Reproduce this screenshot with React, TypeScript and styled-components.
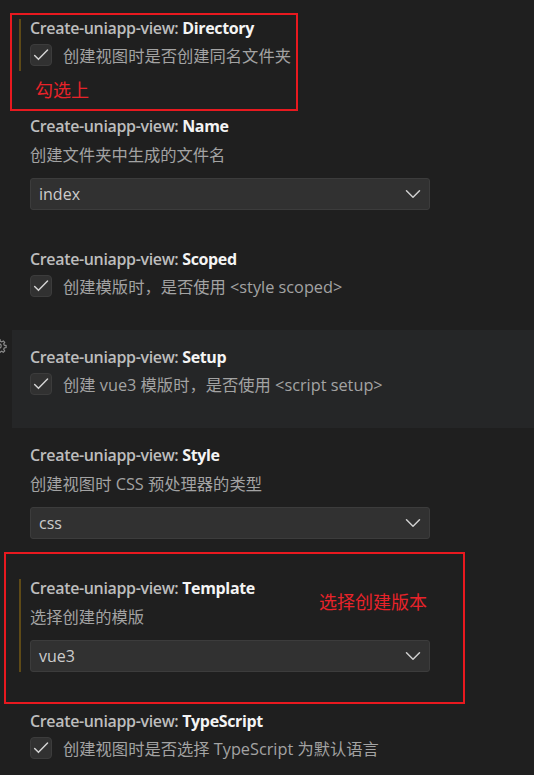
import React from "react";
import styled, { createGlobalStyle } from "styled-components";

const GlobalStyle = createGlobalStyle`
  html, body {
    margin: 0;
    padding: 0;
    background: #1f1f1f;
  }
  body {
    font-family: "Open Sans", "Noto Sans CJK SC", sans-serif;
    -webkit-font-smoothing: antialiased;
  }
`;

const Page = styled.div`
  position: relative;
  width: 534px;
  min-height: 775px;
  padding-top: 1px;
  box-sizing: border-box;
  overflow: hidden;
  background: #1f1f1f;
`;

const Item = styled.section<{ $bool?: boolean; $hover?: boolean; $modified?: boolean }>`
  position: relative;
  margin-left: 12px;
  padding: 16px 0 ${(p) => (p.$bool ? 33 : 22)}px 18px;
  background: ${(p) => (p.$hover ? "#252627" : "transparent")};
  display: flex;
  flex-direction: column;

  &::before {
    content: "";
    display: ${(p) => (p.$modified ? "block" : "none")};
    position: absolute;
    left: 7px;
    top: 18px;
    bottom: ${(p) => (p.$bool ? 28 : 22)}px;
    width: 2px;
    background: #5e4a17;
  }
`;

const Title = styled.div`
  font-size: 16px;
  line-height: 22px;
  font-weight: 600;
  letter-spacing: -0.35px;
  white-space: nowrap;
`;

const Category = styled.span`
  color: #bdbdbd;
`;

const Label = styled.span`
  color: #f4f4f4;
  font-weight: 700;
`;

const Description = styled.div`
  margin-top: 7px;
  font-size: 16.3px;
  line-height: 22px;
  color: #a3a3a3;
  white-space: nowrap;
`;

const CheckRow = styled.label`
  margin-top: 5px;
  display: flex;
  align-items: center;
  gap: 11px;
  height: 22px;
  font-size: 16.3px;
  color: #a3a3a3;
  white-space: nowrap;
`;

const Box = styled.span`
  width: 22px;
  height: 22px;
  box-sizing: border-box;
  border: 1px solid #3c3c3c;
  border-radius: 4px;
  background: #313131;
  display: flex;
  align-items: center;
  justify-content: center;
  flex: none;
`;

const Select = styled.div`
  margin-top: 12px;
  width: 400px;
  height: 32px;
  box-sizing: border-box;
  border: 1px solid #3c3c3c;
  border-radius: 3px;
  background: #313131;
  display: flex;
  align-items: center;
  justify-content: space-between;
  padding: 0 8px 0 8px;
  font-size: 16px;
  color: #cccccc;
`;

const Gear = styled.span`
  position: absolute;
  left: -21px;
  top: 8px;
  width: 16px;
  height: 16px;
  color: #8c8c8c;
  display: flex;
`;

const Annotation = styled.div<{ $left: number; $top: number; $w: number; $h: number }>`
  position: absolute;
  left: ${(p) => p.$left}px;
  top: ${(p) => p.$top}px;
  width: ${(p) => p.$w}px;
  height: ${(p) => p.$h}px;
  box-sizing: border-box;
  border: 2px solid #e8191f;
  pointer-events: none;
`;

const Note = styled.div<{ $left: number; $top: number }>`
  position: absolute;
  left: ${(p) => p.$left}px;
  top: ${(p) => p.$top}px;
  font-family: "Noto Sans CJK SC", sans-serif;
  font-size: 18px;
  line-height: 22px;
  color: #e8232a;
  white-space: nowrap;
`;

const Check = () => (
  <svg width="22" height="22" viewBox="0 0 22 22" fill="none">
    <path d="M4 11.5 L8.2 15.8 L18.2 5.4" stroke="#d4d4d4" strokeWidth="1.6" strokeLinecap="round" strokeLinejoin="round" />
  </svg>
);

const Chevron = () => (
  <svg width="16" height="10" viewBox="0 0 16 10" fill="none">
    <path d="M1.5 1.8 L8 8.2 L14.5 1.8" stroke="#d0d0d0" strokeWidth="1.5" strokeLinecap="round" strokeLinejoin="round" />
  </svg>
);

const GearIcon = () => (
  <svg width="16" height="16" viewBox="0 0 16 16" fill="none" stroke="currentColor" strokeWidth="1.2">
    <path d="M7 1.5h2l.4 1.8 1.3.6 1.6-1 1.4 1.4-1 1.6.6 1.3 1.8.4v2l-1.8.4-.6 1.3 1 1.6-1.4 1.4-1.6-1-1.3.6L9 14.5H7l-.4-1.8-1.3-.6-1.6 1-1.4-1.4 1-1.6-.6-1.3L1.5 9V7l1.8-.4.6-1.3-1-1.6 1.4-1.4 1.6 1 1.3-.6z" />
    <circle cx="8" cy="8" r="2.2" />
  </svg>
);

type BoolProps = { name: string; text: string; hover?: boolean; modified?: boolean };

const BoolSetting = ({ name, text, hover, modified }: BoolProps) => (
  <Item $bool $hover={hover} $modified={modified}>
    {hover && (
      <Gear>
        <GearIcon />
      </Gear>
    )}
    <Title>
      <Category>Create-uniapp-view: </Category>
      <Label>{name}</Label>
    </Title>
    <CheckRow>
      <Box>
        <Check />
      </Box>
      {text}
    </CheckRow>
  </Item>
);

type EnumProps = { name: string; desc: string; value: string; modified?: boolean };

const EnumSetting = ({ name, desc, value, modified }: EnumProps) => (
  <Item $modified={modified}>
    <Title>
      <Category>Create-uniapp-view: </Category>
      <Label>{name}</Label>
    </Title>
    <Description>{desc}</Description>
    <Select>
      <span>{value}</span>
      <Chevron />
    </Select>
  </Item>
);

export default function App() {
  return (
    <Page>
      <GlobalStyle />
      <BoolSetting name="Directory" text="创建视图时是否创建同名文件夹" modified />
      <EnumSetting name="Name" desc="创建文件夹中生成的文件名" value="index" />
      <BoolSetting name="Scoped" text="创建模版时，是否使用 <style scoped>" />
      <BoolSetting name="Setup" text="创建 vue3 模版时，是否使用 <script setup>" hover />
      <EnumSetting name="Style" desc="创建视图时 CSS 预处理器的类型" value="css" />
      <EnumSetting name="Template" desc="选择创建的模版" value="vue3" modified />
      <BoolSetting name="TypeScript" text="创建视图时是否选择 TypeScript 为默认语言" />

      <Annotation $left={10} $top={13} $w={288} $h={98} />
      <Note $left={35} $top={78}>勾选上</Note>
      <Annotation $left={4} $top={552} $w={461} $h={152} />
      <Note $left={319} $top={590}>选择创建版本</Note>
    </Page>
  );
}
